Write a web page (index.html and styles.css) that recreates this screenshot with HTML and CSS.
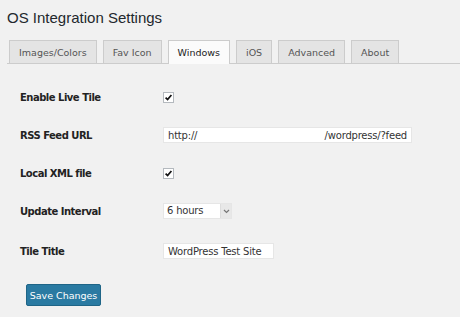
FILE: index.html
```html
<!DOCTYPE html>
<html>
<head>
<meta charset="utf-8">
<title>OS Integration Settings</title>
<link rel="stylesheet" href="styles.css">
</head>
<body>
<div class="wrap">
    <h2 class="title">OS Integration Settings</h2>
    <div class="tabs">
        <a class="tab" href="javascript:;">Images/Colors</a>
        <a class="tab" href="javascript:;">Fav Icon</a>
        <a class="tab active" href="javascript:;">Windows</a>
        <a class="tab" href="javascript:;">iOS</a>
        <a class="tab" href="javascript:;">Advanced</a>
        <a class="tab" href="javascript:;">About</a>
    </div>
    <div class="form">
        <div class="row">
            <div class="label">Enable Live Tile</div>
            <div class="field"><span class="check"><svg width="9" height="9" viewBox="0 0 9 9"><path d="M1.6 4.6 L3.6 6.6 L7.4 2" fill="none" stroke="#111" stroke-width="1.7"/></svg></span></div>
        </div>
        <div class="row">
            <div class="label">RSS Feed URL</div>
            <div class="field"><div class="input url"><span>http://</span><span>/wordpress/?feed</span></div></div>
        </div>
        <div class="row">
            <div class="label">Local XML file</div>
            <div class="field"><span class="check"><svg width="9" height="9" viewBox="0 0 9 9"><path d="M1.6 4.6 L3.6 6.6 L7.4 2" fill="none" stroke="#111" stroke-width="1.7"/></svg></span></div>
        </div>
        <div class="row">
            <div class="label">Update Interval</div>
            <div class="field">
                <div class="select"><span class="val">6 hours</span><span class="arrow"><svg width="7" height="5" viewBox="0 0 7 5"><path d="M1 1 L3.5 3.5 L6 1" fill="none" stroke="#777" stroke-width="1.2"/></svg></span></div>
            </div>
        </div>
        <div class="row last">
            <div class="label">Tile Title</div>
            <div class="field"><div class="input title_in">WordPress Test Site</div></div>
        </div>
    </div>
    <div class="submit"><a class="button" href="javascript:;">Save Changes</a></div>
</div>
</body>
</html>
```

FILE: styles.css
```css
*{padding:0; margin:0}
body { background: #f1f1f1; font-family: "DejaVu Sans", Verdana, sans-serif; font-size: 10px; color: #333; }
a { text-decoration: none; }
.wrap { padding: 0 0 0 7px; }
.title { font: 400 15px "Liberation Sans", Arial, sans-serif; color: #23282d; padding-top: 9px; height: 31px; }
.tabs { display: flex; gap: 6px; padding-left: 2px; border-bottom: 1px solid #ccc; height: 23px; }
.tab { display: flex; align-items: center; padding: 0 9px; height: 23px; box-sizing: border-box; background: #e4e4e4; border: 1px solid #ccc; border-bottom: 0; color: #555; font-size: 9.5px; }
.tab.active { background: #fbfbfb; color: #222; height: 24px; }
.form { padding: 14px 0 0 13px; }
.row { display: flex; align-items: center; height: 38px; }
.row.last { height: 42px; }
.label { width: 143px; font-weight: bold; color: #222; letter-spacing: -0.5px; }
.field { display: flex; align-items: center; }
.check { width: 11px; height: 11px; box-sizing: border-box; border: 1px solid #b4b9be; background: #fff; display: flex; align-items: center; justify-content: center; }
.input { background: #fff; border: 1px solid #e6e6e6; height: 16px; box-sizing: border-box; display: flex; align-items: center; padding: 0 4px; color: #333; letter-spacing: -0.2px; }
.url { width: 249px; justify-content: space-between; }
.title_in { width: 111px; }
.select { display: flex; width: 69px; height: 16px; background: #fff; border: 1px solid #e6e6e6; box-sizing: border-box; }
.select .val { flex: 1; padding-left: 3px; line-height: 14px; letter-spacing: -0.2px; }
.select .arrow { width: 10px; background: #e8e8e8; border-left: 1px solid #ddd; display: flex; align-items: center; justify-content: center; }
.submit { padding: 12px 0 0 19px; }
.button { display: inline-block; width: 75px; height: 22px; line-height: 21px; box-sizing: border-box; text-align: center; background: #2a7aa2; border: 1px solid #1f6587; border-radius: 2px; color: #fff; font-size: 9.5px; }
```
